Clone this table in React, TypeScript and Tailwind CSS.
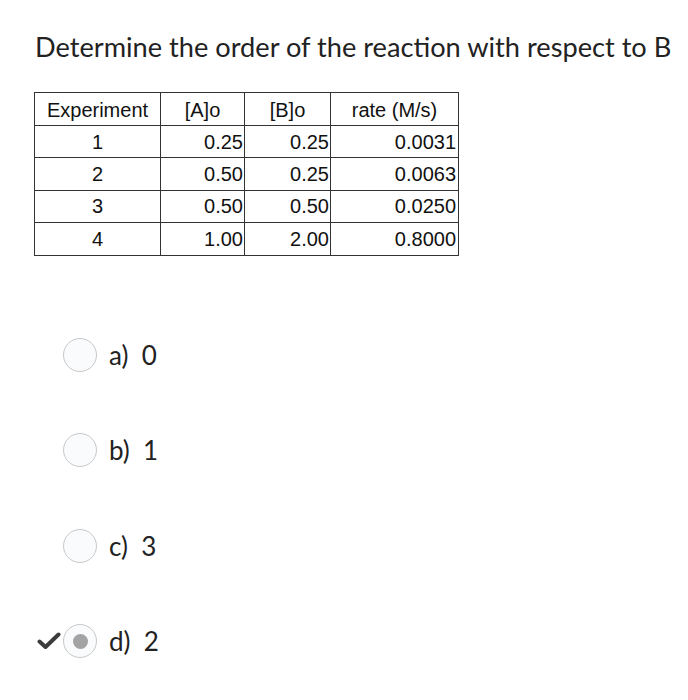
const rows = [
  ["1", "0.25", "0.25", "0.0031"],
  ["2", "0.50", "0.25", "0.0063"],
  ["3", "0.50", "0.50", "0.0250"],
  ["4", "1.00", "2.00", "0.8000"],
];

const options = [
  { label: "a)", value: "0", selected: false },
  { label: "b)", value: "1", selected: false },
  { label: "c)", value: "3", selected: false },
  { label: "d)", value: "2", selected: true },
];

function Radio({ selected }: { selected: boolean }) {
  return (
    <span className="flex h-[34px] w-[34px] items-center justify-center rounded-full border border-[#c8c8c8] bg-[#f9fbfd]">
      {selected && <span className="h-[15px] w-[15px] rounded-full bg-[#a3a3a3]" />}
    </span>
  );
}

export default function App() {
  return (
    <div className="h-[700px] w-[688px] bg-white text-[#222]" style={{ fontFamily: "Lato, 'Noto Sans', sans-serif" }}>
      <h1 className="pl-[35px] pt-[29px] text-[27.2px] leading-[36px] font-normal">
        Determine the order of the reaction with respect to B
      </h1>

      {/* data table */}
      <table
        className="ml-[34px] mt-[27px] border-collapse text-[20px] text-[#111]"
        style={{ fontFamily: "'Liberation Sans', Arial, sans-serif" }}
      >
        <thead>
          <tr className="h-[32.4px]">
            <th className="w-[126px] border border-[#333] px-0 pt-[2px] text-center font-normal">Experiment</th>
            <th className="w-[84px] border border-[#333] px-0 pt-[2px] text-center font-normal">[A]o</th>
            <th className="w-[86px] border border-[#333] px-0 pt-[2px] text-center font-normal">[B]o</th>
            <th className="w-[128px] border border-[#333] px-0 pt-[2px] text-center font-normal">rate (M/s)</th>
          </tr>
        </thead>
        <tbody>
          {rows.map((r) => (
            <tr key={r[0]} className="h-[32.4px]">
              <td className="border border-[#333] text-center">{r[0]}</td>
              <td className="border border-[#333] pr-[1px] text-right">{r[1]}</td>
              <td className="border border-[#333] pr-[1px] text-right">{r[2]}</td>
              <td className="border border-[#333] pr-[2px] text-right">{r[3]}</td>
            </tr>
          ))}
        </tbody>
      </table>

      {/* answer choices */}
      <div className="mt-[82px] flex flex-col gap-[61.5px]">
        {options.map((o) => (
          <div key={o.label} className="flex h-[34px] items-center">
            <span className="flex w-[63px] justify-end pr-[2px]">
              {o.selected && (
                <svg width="24" height="18" viewBox="0 0 24 18">
                  <path d="M2.5 9.5 L8.5 15 L21.5 2.5" fill="none" stroke="#3c3c3c" strokeWidth="4" strokeLinecap="round" strokeLinejoin="round" />
                </svg>
              )}
            </span>
            <Radio selected={o.selected} />
            <span className="ml-[12px] text-[26px] leading-none">
              {o.label}&nbsp; {o.value}
            </span>
          </div>
        ))}
      </div>
    </div>
  );
}
